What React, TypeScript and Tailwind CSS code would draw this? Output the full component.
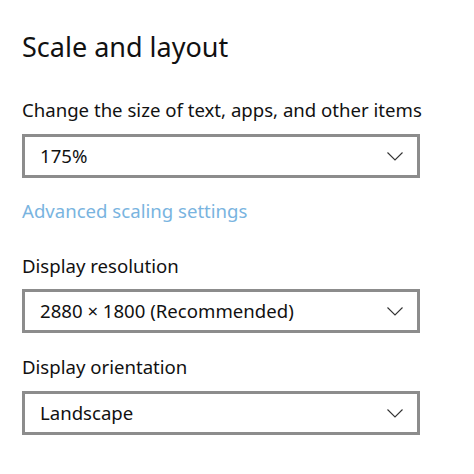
import React from "react";

function Chevron() {
  return (
    <svg width="16" height="9" viewBox="0 0 16 9" fill="none" className="shrink-0">
      <path d="M0.5 0.5 L8 8 L15.5 0.5" stroke="#333" strokeWidth="1.1" />
    </svg>
  );
}

function Select({ value }: { value: string }) {
  return (
    <div className="flex h-[44px] w-[398px] items-center justify-between border-[3px] border-[#8c8c8c] bg-white pl-[15px] pr-[14px]">
      <span className="text-[18.6px] text-[#111]">{value}</span>
      <Chevron />
    </div>
  );
}

export default function App() {
  return (
    <div
      className="flex h-[474px] w-[474px] flex-col bg-white pl-[22px] text-black"
      style={{ fontFamily: '"Noto Sans", "Open Sans", sans-serif' }}
    >
      <h1 className="mt-[29px] text-[27px] leading-[36px] text-[#111]">Scale and layout</h1>
      <p className="mt-[32px] text-[18.6px] leading-[26px] text-[#111]">
        Change the size of text, apps, and other items
      </p>
      <div className="mt-[11px]">
        <Select value="175%" />
      </div>
      <p className="mt-[20px] text-[18.6px] leading-[26px] text-[#79b4e0]">Advanced scaling settings</p>
      <p className="mt-[29px] text-[18.6px] leading-[26px] text-[#111]">Display resolution</p>
      <div className="mt-[10px]">
        <Select value="2880 × 1800 (Recommended)" />
      </div>
      <p className="mt-[21px] text-[18.6px] leading-[26px] text-[#111]">Display orientation</p>
      <div className="mt-[11px]">
        <Select value="Landscape" />
      </div>
    </div>
  );
}
